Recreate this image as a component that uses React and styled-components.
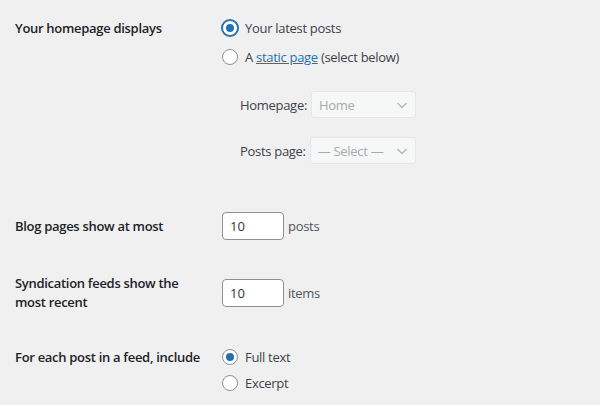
import styled, { createGlobalStyle } from "styled-components";

const GlobalStyle = createGlobalStyle`
  body {
    margin: 0;
    background: #f0f0f1;
    font-family: "Open Sans", "Noto Sans", sans-serif;
    font-size: 13px;
    letter-spacing: -0.3px;
    color: #3c434a;
  }
`;

const Page = styled.div`
  padding: 0 15px;
  width: 570px;
  height: 405px;
  overflow: hidden;
`;

const Row = styled.div`
  display: grid;
  grid-template-columns: 207px 1fr;
  align-items: ${p => (p.$center ? "center" : "start")};
  padding-top: ${p => p.$top || 0}px;
`;

const Label = styled.div`
  font-weight: 600;
  color: #1d2327;
  line-height: 19px;
  padding-top: ${p => p.$offset || 0}px;
  width: 195px;
`;

const Options = styled.div`
  display: flex;
  flex-direction: column;
  gap: ${p => p.$gap || 9}px;
`;

const RadioLine = styled.label`
  display: flex;
  align-items: center;
  gap: 7px;
  line-height: 20px;
`;

const Radio = styled.span`
  box-sizing: border-box;
  width: 16px;
  height: 16px;
  border-radius: 50%;
  background: #fff;
  border: 1px solid ${p => (p.$focused ? "#2271b1" : "#8c8f94")};
  box-shadow: ${p => (p.$focused ? "0 0 0 1px #2271b1" : "none")};
  display: flex;
  align-items: center;
  justify-content: center;
  flex-shrink: 0;

  &::after {
    content: "";
    width: 8px;
    height: 8px;
    border-radius: 50%;
    background: ${p => (p.$checked ? "#2271b1" : "transparent")};
  }
`;

const Link = styled.a`
  color: #2271b1;
  text-decoration: underline;
`;

const SubFields = styled.div`
  display: flex;
  flex-direction: column;
  gap: 19px;
  padding: 24px 0 0 18px;
`;

const SubField = styled.div`
  display: flex;
  align-items: center;
  gap: 4px;
`;

const Select = styled.div`
  box-sizing: border-box;
  width: ${p => p.$width}px;
  height: 27px;
  border: 1px solid #e6e6e8;
  border-radius: 3px;
  background: #f6f7f7;
  color: #a7aaad;
  display: flex;
  align-items: center;
  justify-content: space-between;
  padding: 0 6px 0 7px;
`;

const NumberField = styled.div`
  display: flex;
  align-items: center;
  gap: 4px;
`;

const Input = styled.input`
  box-sizing: border-box;
  width: 62px;
  height: 28px;
  border: 1px solid #8c8f94;
  border-radius: 4px;
  background: #fff;
  padding: 0 7px;
  font: inherit;
  color: #2c3338;
  outline: none;
`;

const Unit = styled.span`
  color: #50575e;
`;

function Chevron() {
  return (
    <svg width="14" height="14" viewBox="0 0 14 14">
      <polyline points="2.5,5 7,9.5 11.5,5" fill="none" stroke="#b5b8bb" strokeWidth="1.4" />
    </svg>
  );
}

export default function App() {
  return (
    <>
      <GlobalStyle />
      <Page>
        <Row $top={18}>
          <Label $offset={1}>Your homepage displays</Label>
          <div>
            <Options>
              <RadioLine>
                <Radio $checked $focused />
                Your latest posts
              </RadioLine>
              <RadioLine>
                <Radio />
                <span>A <Link href="#">static page</Link> (select below)</span>
              </RadioLine>
            </Options>
            <SubFields>
              <SubField>
                Homepage:
                <Select $width={105}>Home<Chevron /></Select>
              </SubField>
              <SubField>
                Posts page:
                <Select $width={106}>— Select —<Chevron /></Select>
              </SubField>
            </SubFields>
          </div>
        </Row>

        <Row $top={48} $center>
          <Label>Blog pages show at most</Label>
          <NumberField>
            <Input defaultValue="10" />
            <Unit>posts</Unit>
          </NumberField>
        </Row>

        <Row $top={34} $center>
          <Label>
            Syndication feeds show the
            <br />
            most recent
          </Label>
          <NumberField>
            <Input defaultValue="10" />
            <Unit>items</Unit>
          </NumberField>
        </Row>

        <Row $top={35}>
          <Label $offset={1}>For each post in a feed, include</Label>
          <Options $gap={6}>
            <RadioLine>
              <Radio $checked />
              Full text
            </RadioLine>
            <RadioLine>
              <Radio />
              Excerpt
            </RadioLine>
          </Options>
        </Row>
      </Page>
    </>
  );
}
